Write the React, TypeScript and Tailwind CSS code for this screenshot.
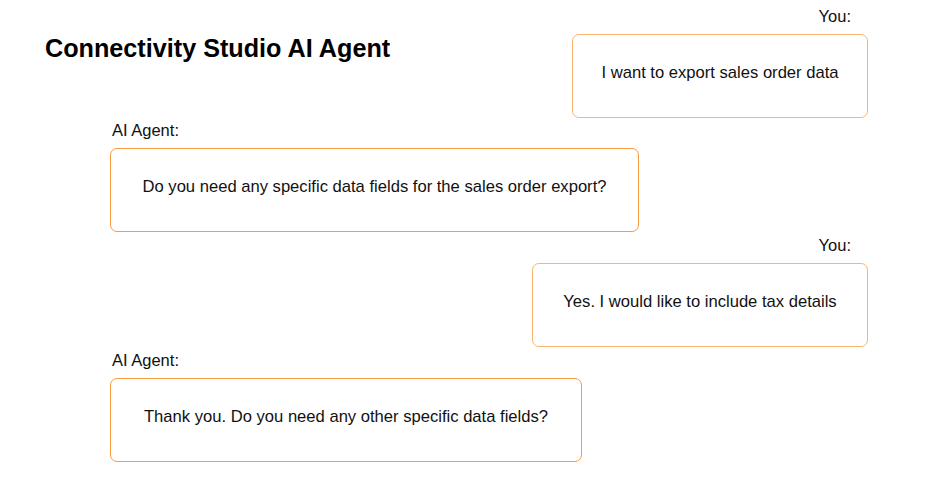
import React from "react";

const font = { fontFamily: '"Liberation Sans", Arial, Helvetica, sans-serif' };

function UserMsg({ text, widthClass }: { text: string; widthClass: string }) {
  return (
    <div className="flex flex-col items-end">
      <div className="leading-[19px] text-[16.5px] text-[#111] pr-[17px]">You:</div>
      <div
        className={`mt-[8px] h-[84px] ${widthClass} rounded-[7px] border border-[#fbb570] bg-white pt-[28px] text-center text-[16.6px] leading-[19px] text-[#111]`}
      >
        {text}
      </div>
    </div>
  );
}

function AgentMsg({ text, widthClass }: { text: string; widthClass: string }) {
  return (
    <div className="flex flex-col items-start">
      <div className="leading-[19px] text-[16.5px] text-[#111] pl-[2px]">AI Agent:</div>
      <div
        className={`mt-[8px] h-[84px] ${widthClass} rounded-[7px] border border-[#f99b40] bg-white pt-[28px] text-center text-[16.6px] leading-[19px] text-[#111]`}
      >
        {text}
      </div>
    </div>
  );
}

export default function App() {
  return (
    <div className="h-[503px] w-[939px] bg-white overflow-hidden" style={font}>
      <div className="flex pt-[7px]">
        <div className="w-[572px] shrink-0 pl-[45px] pt-[26px]">
          <h1 className="text-[25.2px] font-bold leading-[30px] text-black">
            Connectivity Studio AI Agent
          </h1>
        </div>
        <div className="w-[296px] shrink-0">
          <UserMsg text="I want to export sales order data" widthClass="w-[296px]" />
        </div>
      </div>
      <div className="ml-[110px] w-[758px] flex flex-col gap-[4px] mt-[3px]">
        <AgentMsg
          text="Do you need any specific data fields for the sales order export?"
          widthClass="w-[529px]"
        />
        <UserMsg text="Yes. I would like to include tax details" widthClass="w-[336px]" />
        <AgentMsg
          text="Thank you. Do you need any other specific data fields?"
          widthClass="w-[472px]"
        />
      </div>
    </div>
  );
}
